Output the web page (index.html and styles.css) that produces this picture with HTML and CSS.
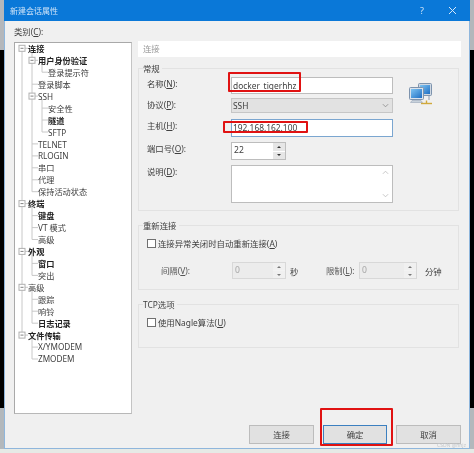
FILE: index.html
```html
<!DOCTYPE html>
<html lang="zh">
<head>
<meta charset="utf-8">
<title>新建会话属性</title>
<link rel="stylesheet" href="styles.css">
</head>
<body>
<div class="dialog">
  <div class="titlebar">
    <span class="title">新建会话属性</span>
    <span class="help">?</span>
    <svg class="close" viewBox="0 0 9 9"><path d="M1 1l7 7M8 1L1 8"/></svg>
  </div>
  <div class="client">
    <div class="left">
      <div class="cat-label">类别(<u>C</u>):</div>
      <div class="tree">
        <svg class="tree-lines" viewBox="0 0 116 370">
          <path d="M7 5V292M7 160.6H13M7 208.4H13M7 244.3H13M7 292.1H13M7 5.3H13
                   M17 9V148.7M17 17.3H23M17 41.2H23M17 53.1H23M17 100.9H23M17 112.9H23M17 124.8H23M17 136.8H23M17 148.7H23
                   M27 20V29.2H33M27 56V89H33M27 65.1H33M27 77H33
                   M17 160.6V196.5H23M17 172.6H23M17 184.6H23
                   M17 208.4V232.4H23M17 220.4H23
                   M17 244.3V280.2H23M17 256.3H23M17 268.2H23
                   M17 292.1V316H23M17 304.1H23"/>
          <g class="exp">
            <rect x="4" y="2.3" width="6" height="6"/><path d="M5.5 5.3H8.5"/>
            <rect x="14" y="14.3" width="6" height="6"/><path d="M15.5 17.3H18.5"/>
            <rect x="14" y="50.1" width="6" height="6"/><path d="M15.5 53.1H18.5"/>
            <rect x="4" y="157.6" width="6" height="6"/><path d="M5.5 160.6H8.5"/>
            <rect x="4" y="205.4" width="6" height="6"/><path d="M5.5 208.4H8.5"/>
            <rect x="4" y="241.3" width="6" height="6"/><path d="M5.5 244.3H8.5"/>
            <rect x="4" y="289.1" width="6" height="6"/><path d="M5.5 292.1H8.5"/>
          </g>
        </svg>
        <div class="node l0 b">连接</div>
        <div class="node l1 b">用户身份验证</div>
        <div class="node l2">登录提示符</div>
        <div class="node l1">登录脚本</div>
        <div class="node l1">SSH</div>
        <div class="node l2">安全性</div>
        <div class="node l2 b">隧道</div>
        <div class="node l2">SFTP</div>
        <div class="node l1">TELNET</div>
        <div class="node l1">RLOGIN</div>
        <div class="node l1">串口</div>
        <div class="node l1">代理</div>
        <div class="node l1">保持活动状态</div>
        <div class="node l0 b">终端</div>
        <div class="node l1 b">键盘</div>
        <div class="node l1">VT 模式</div>
        <div class="node l1">高级</div>
        <div class="node l0 b">外观</div>
        <div class="node l1 b">窗口</div>
        <div class="node l1">突出</div>
        <div class="node l0">高级</div>
        <div class="node l1">跟踪</div>
        <div class="node l1">响铃</div>
        <div class="node l1 b">日志记录</div>
        <div class="node l0 b">文件传输</div>
        <div class="node l1">X/YMODEM</div>
        <div class="node l1">ZMODEM</div>
      </div>
    </div>
    <div class="right">
      <div class="page-head">连接</div>
      <section class="group group-general">
        <div class="group-title">常规</div>
        <div class="form">
          <label class="lbl">名称(<u>N</u>):</label>
          <div class="field h17">docker_tigerhhz</div>
          <svg class="net-icon" viewBox="0 0 24 22">
            <defs>
              <linearGradient id="scr" x1="0" y1="0" x2="1" y2="1"><stop offset="0" stop-color="#7fc4f2"/><stop offset="1" stop-color="#1f6fc4"/></linearGradient>
            </defs>
            <rect x="9.5" y="0.5" width="13" height="12" rx="1" fill="#cfd8e2" stroke="#7d93ad"/>
            <rect x="11" y="2" width="10" height="9" fill="url(#scr)"/>
            <path d="M20 13v4" stroke="#8c9bb0" fill="none"/>
            <rect x="0.5" y="4.5" width="14" height="12" rx="1" fill="#dbe3ec" stroke="#7d93ad"/>
            <rect x="2" y="6" width="11" height="9" fill="url(#scr)"/>
            <path d="M3 17.5h9l1.5 2h-12z" fill="#c8d2dc" stroke="#8c9bb0" stroke-width=".5"/>
            <path d="M12 20.5h11" stroke="#d0a93c" stroke-width="1.4" fill="none"/>
            <path d="M17.5 17.5v3" stroke="#d0a93c" stroke-width="1.4" fill="none"/>
          </svg>
          <label class="lbl">协议(<u>P</u>):</label>
          <div class="field select">SSH
            <svg class="chev" viewBox="0 0 8 5"><path d="M1 1l3 3 3-3"/></svg>
          </div>
          <label class="lbl">主机(<u>H</u>):</label>
          <div class="field h18 focus">192.168.162.100</div>
          <label class="lbl">端口号(<u>O</u>):</label>
          <div class="spin port">
            <div class="spin-val">22</div>
            <div class="spin-btns"><span class="up"></span><span class="down"></span></div>
          </div>
          <label class="lbl">说明(<u>D</u>):</label>
          <div class="field memo">
            <div class="memo-bar">
              <svg class="chev" viewBox="0 0 8 5"><path d="M1 4l3-3 3 3"/></svg>
              <svg class="chev" viewBox="0 0 8 5"><path d="M1 1l3 3 3-3"/></svg>
            </div>
          </div>
        </div>
      </section>
      <section class="group group-reconnect">
        <div class="group-title">重新连接</div>
        <div class="check-row"><span class="check"></span>连接异常关闭时自动重新连接(<u>A</u>)</div>
        <div class="retry-row">
          <label class="lbl lbl-interval">间隔(<u>V</u>):</label>
          <div class="spin off sw-a">
            <div class="spin-val">0</div>
            <div class="spin-btns"><span class="up"></span><span class="down"></span></div>
          </div>
          <span class="unit unit-s">秒</span>
          <label class="lbl lbl-limit">限制(<u>L</u>):</label>
          <div class="spin off sw-b">
            <div class="spin-val">0</div>
            <div class="spin-btns"><span class="up"></span><span class="down"></span></div>
          </div>
          <span class="unit unit-m">分钟</span>
        </div>
      </section>
      <section class="group group-tcp">
        <div class="group-title">TCP选项</div>
        <div class="check-row"><span class="check"></span>使用Nagle算法(<u>U</u>)</div>
      </section>
      <div class="buttons">
        <div class="btn">连接</div>
        <div class="btn default">确定</div>
        <div class="btn">取消</div>
      </div>
    </div>
  </div>
  <div class="mark mark-name"></div>
  <div class="mark mark-host"></div>
  <div class="mark mark-ok"></div>
  <div class="watermark">CSDN @hhjz</div>
</div>
</body>
</html>
```
FILE: styles.css
```css
* { box-sizing: border-box; }
html, body { margin: 0; padding: 0; }
body {
  width: 474px;
  height: 453px;
  overflow: hidden;
  background: linear-gradient(to bottom, #b4b7bb 0 50px, #000 50px 408px, #b3b8bc 408px 449px, #e6eae6 449px);
  font-family: "Noto Sans", "Noto Sans CJK SC", sans-serif;
  font-size: 8.4px;
  color: #404040;
}
.dialog {
  position: relative;
  margin-left: 4px;
  width: 466px;
  height: 449px;
  background: #f0f0f0;
  border: 1px solid #8fb6dc;
  border-top: 0;
  display: flex;
  flex-direction: column;
  filter: blur(.4px);
}
.titlebar {
  height: 21px;
  margin: 0 -1px;
  background: #0a78d8;
  color: #cfe4f8;
  display: flex;
  align-items: center;
  padding: 0 13px 0 6px;
  flex: none;
}
.title { font-size: 8px; flex: 1; }
.help { font-size: 9px; margin-right: 24px; }
.close { width: 9px; height: 9px; fill: none; stroke: #d6e8fa; stroke-width: 1; }
.client {
  flex: 1;
  display: flex;
  gap: 6px;
  padding: 5px 8px 4px 9px;
}
.left { width: 118px; flex: none; }
.cat-label { height: 16px; line-height: 11px; }
.tree {
  position: relative;
  height: 372px;
  background: #fff;
  border: 1px solid #a9a9a9;
  border-right-color: #c4c4c4;
  border-bottom-color: #b8b8b8;
}
.tree-lines {
  position: absolute;
  inset: 0;
  width: 116px;
  height: 370px;
  fill: none;
  stroke: #c8c8c8;
  stroke-width: 1;
}
.exp rect { fill: #fff; stroke: #b0b0b0; }
.exp path { stroke: #808080; }
.node {
  position: relative;
  height: 11.95px;
  line-height: 11px;
  font-size: 8.2px;
  white-space: nowrap;
}
.l0 { padding-left: 13px; }
.l1 { padding-left: 23px; }
.l2 { padding-left: 33px; }
.b { font-weight: 700; color: #222; }
.right {
  width: 323px;
  flex: none;
  display: flex;
  flex-direction: column;
  padding-top: 15px;
}
.page-head {
  height: 16px;
  line-height: 15px;
  background: #fff;
  color: #9a9a9a;
  padding-left: 5px;
  margin-bottom: 11px;
  flex: none;
}
.group {
  width: 321px;
  border: 1px solid #e2e2e2;
  flex: none;
}
.group-title {
  width: fit-content;
  margin: -6px 0 0 4px;
  padding: 0 2px 0 0;
  height: 11px;
  line-height: 11px;
  background: #f0f0f0;
}
.group-general { height: 143px; }
.group-reconnect { height: 65px; margin-top: 14px; }
.group-tcp { height: 44px; margin-top: 14px; }
.form {
  display: grid;
  grid-template-columns: 84px 162px 24px;
  grid-template-rows: 21px 21px 23px 23px 38px;
  column-gap: 0;
  padding: 3px 0 0 8px;
  align-items: start;
}
.lbl { grid-column: 1; line-height: 13px; white-space: nowrap; }
.field {
  grid-column: 2;
  background: #fff;
  border: 1px solid #bdbdbd;
  line-height: 15px;
  padding-left: 1px;
  font-size: 8.4px;
  position: relative;
}
.h17 { height: 17px; }
.h18 { height: 18px; line-height: 16px; }
.focus { border-color: #7ba6d0; }
.select {
  height: 15px;
  line-height: 14px;
  background: #e2e2e2;
  border-color: #c6c6c6;
  display: flex;
  justify-content: space-between;
  align-items: center;
  padding-right: 3px;
}
.chev { width: 7px; height: 5px; fill: none; stroke: #909090; stroke-width: 1; display: block; }
.memo { height: 38px; display: flex; justify-content: flex-end; }
.memo-bar {
  width: 13px;
  padding: 4px 3px;
  display: flex;
  flex-direction: column;
  justify-content: space-between;
  align-items: center;
}
.memo-bar .chev { stroke: #c0c0c0; }
.net-icon {
  grid-column: 3;
  grid-row: 1 / 3;
  width: 24px;
  height: 22px;
  margin: 6px 0 0 16px;
}
.spin {
  grid-column: 2;
  display: flex;
  height: 18px;
  width: 55px;
  background: #fff;
  border: 1px solid #bdbdbd;
}
.spin-val { flex: 1; line-height: 15px; padding-left: 2px; font-size: 8.6px; }
.spin-btns {
  width: 12px;
  flex: none;
  display: flex;
  flex-direction: column;
  gap: 1px;
  background: #fff;
}
.spin-btns span {
  flex: 1;
  background: #e6e6e6;
  display: flex;
  align-items: center;
  justify-content: center;
}
.spin-btns span::after {
  content: "";
  border-left: 2px solid transparent;
  border-right: 2px solid transparent;
}
.spin-btns .up::after { border-bottom: 2px solid #333; }
.spin-btns .down::after { border-top: 2px solid #333; }
.off { background: #ececec; border-color: #d8d8d8; color: #a6a6a6; }
.off .spin-btns { background: #f3f3f3; }
.off .spin-btns span { background: #f0f0f0; }
.off .spin-btns .up::after { border-bottom-color: #777; }
.off .spin-btns .down::after { border-top-color: #777; }
.check-row {
  display: flex;
  align-items: center;
  height: 9px;
  line-height: 9px;
  margin: 8px 0 0 8px;
  white-space: nowrap;
}
.check {
  width: 9px;
  height: 9px;
  background: #fff;
  border: 1px solid #707070;
  margin-right: 2px;
  flex: none;
}
.retry-row {
  display: flex;
  align-items: center;
  height: 17px;
  margin-top: 14px;
  padding-left: 22px;
}
.lbl-interval { width: 71px; color: #555; }
.sw-a { width: 54px; height: 17px; }
.unit-s { margin-left: 4px; width: 36px; }
.lbl-limit { width: 33px; color: #555; }
.sw-b { width: 58px; height: 17px; }
.unit-m { margin-left: 8px; }
.buttons {
  margin-top: auto;
  display: flex;
  justify-content: flex-end;
  gap: 9px;
  padding-right: 0;
}
.btn {
  width: 65px;
  height: 19px;
  line-height: 17px;
  text-align: center;
  background: #e1e1e1;
  border: 1px solid #bcbcbc;
}
.default { width: 64px; border-color: #3c80c0; }
.mark {
  position: absolute;
  border: 2px solid #e01212;
  border-radius: 1px;
}
.mark-name { left: 223px; top: 72px; width: 73px; height: 20px; }
.mark-host { left: 218px; top: 121px; width: 85px; height: 12px; }
.mark-ok { left: 315px; top: 408px; width: 73px; height: 38px; }
.watermark {
  position: absolute;
  right: 3px;
  bottom: 0;
  font-size: 5px;
  line-height: 6px;
  color: #c4c8cc;
}
```
